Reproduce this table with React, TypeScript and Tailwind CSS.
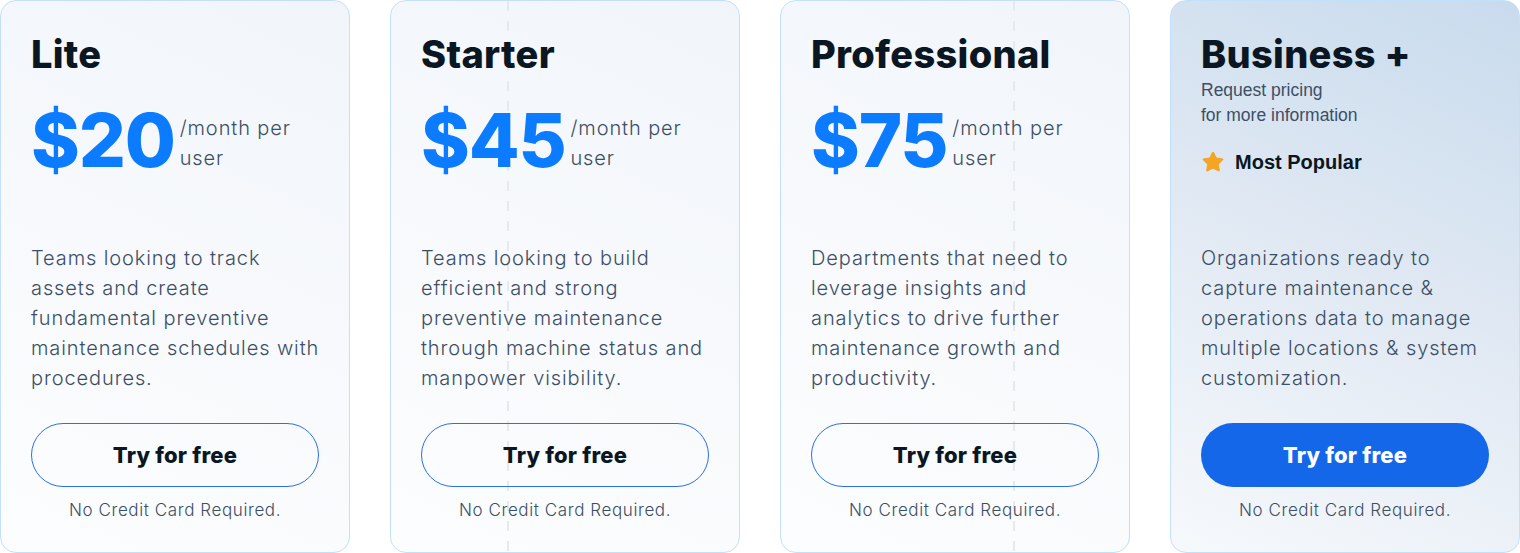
import { Star } from "lucide-react";

type Plan = {
  name: string;
  price?: string;
  lines: string[];
  featured?: boolean;
  dashAt?: string;
};

const plans: Plan[] = [
  {
    name: "Lite",
    price: "$20",
    lines: [
      "Teams looking to track",
      "assets and create",
      "fundamental preventive",
      "maintenance schedules with",
      "procedures.",
    ],
  },
  {
    name: "Starter",
    price: "$45",
    dashAt: "left-[116px]",
    lines: [
      "Teams looking to build",
      "efficient and strong",
      "preventive maintenance",
      "through machine status and",
      "manpower visibility.",
    ],
  },
  {
    name: "Professional",
    price: "$75",
    dashAt: "left-[232px]",
    lines: [
      "Departments that need to",
      "leverage insights and",
      "analytics to drive further",
      "maintenance growth and",
      "productivity.",
    ],
  },
  {
    name: "Business +",
    featured: true,
    lines: [
      "Organizations ready to",
      "capture maintenance &",
      "operations data to manage",
      "multiple locations & system",
      "customization.",
    ],
  },
];

function PlanCard({ plan }: { plan: Plan }) {
  return (
    <div
      className={`relative flex flex-col w-[350px] h-[553px] shrink-0 rounded-[16px] border border-[#c3e0fb] px-[30px] pt-[30px] overflow-hidden ${
        plan.featured
          ? "bg-[linear-gradient(205deg,#c8dbed_0%,#e1e9f3_50%,#f6f9fc_100%)]"
          : "bg-[linear-gradient(205deg,#f1f5fa_0%,#f7f9fc_50%,#fcfdfe_100%)]"
      }`}
    >
      {/* dashed guide line showing through */}
      {plan.dashAt && (
        <div
          className={`absolute top-0 bottom-0 ${plan.dashAt} w-[2px] bg-[repeating-linear-gradient(to_bottom,#e6e9ee_0px,#e6e9ee_10px,transparent_10px,transparent_20px)]`}
        />
      )}

      <div className="relative h-[212px] shrink-0">
        <h2 className="font-['Inter',sans-serif] text-[38px] leading-[46px] font-extrabold text-[#0a1622] tracking-[0.3px]">
          {plan.name}
        </h2>

        {plan.price ? (
          <div className="flex items-start gap-[5px] mt-[26px]">
            <span className="font-['Inter',sans-serif] text-[74px] leading-[74px] font-extrabold text-[#0b7cff] tracking-[-1.2px]">
              {plan.price}
            </span>
            <span className="font-['Inter',sans-serif] text-[20px] leading-[30px] font-light text-[#3c4f66] tracking-[0.9px] mt-[10px]">
              /month per
              <br />
              user
            </span>
          </div>
        ) : (
          <div className="mt-[1px]">
            <p className="font-['Liberation_Sans',Arial,sans-serif] text-[17.5px] leading-[25px] text-[#3c4f66]">
              Request pricing
              <br />
              for more information
            </p>
            <div className="flex items-center gap-[10px] mt-[22px]">
              <Star className="w-[24px] h-[24px] text-[#f5a524]" fill="#f5a524" strokeWidth={1} />
              <span className="font-['Liberation_Sans',Arial,sans-serif] text-[20px] leading-[24px] font-bold text-[#0a1622]">
                Most Popular
              </span>
            </div>
          </div>
        )}
      </div>

      <p className="relative font-['Inter',sans-serif] text-[20px] leading-[30px] font-light text-[#3c4f66] tracking-[0.9px]">
        {plan.lines.map((l) => (
          <span key={l} className="block whitespace-nowrap">
            {l}
          </span>
        ))}
      </p>

      <button
        className={`relative mt-[30px] h-[64px] w-full rounded-full font-['Inter',sans-serif] text-[22px] font-extrabold tracking-[0.2px] ${
          plan.featured
            ? "bg-[#1467e8] text-white"
            : "border border-[#2c6fe6] text-[#0a1622]"
        }`}
      >
        Try for free
      </button>

      <p className="relative mt-[11px] text-center font-['Inter',sans-serif] text-[17px] leading-[24px] font-light text-[#3c4f66] tracking-[0.6px]">
        No Credit Card Required.
      </p>
    </div>
  );
}

export default function App() {
  return (
    <div className="w-[1520px] h-[553px] bg-white flex gap-[40px]">
      {plans.map((p) => (
        <PlanCard key={p.name} plan={p} />
      ))}
    </div>
  );
}
